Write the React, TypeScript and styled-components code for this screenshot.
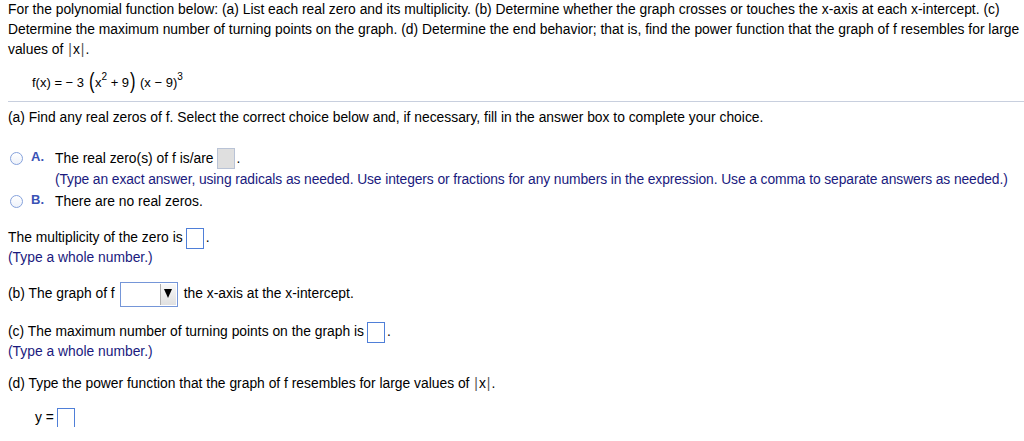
import React from 'react';
import styled, { createGlobalStyle } from 'styled-components';

const GlobalStyle = createGlobalStyle`
  html, body {
    margin: 0;
    padding: 0;
    background: #ffffff;
  }
  body {
    font-family: 'Liberation Sans', Arial, sans-serif;
    font-size: 13.85px;
    color: #000000;
  }
`;

const Page = styled.div`
  padding: 0 0 0 8px;
  width: 1016px;
`;

const Intro = styled.div`
  margin-top: -1px;
`;

const IntroLine = styled.div`
  line-height: 20px;
  height: 20px;
  white-space: pre;
`;

const Bar = styled.span`
  color: #555;
  margin: 0 1px;
`;

const Formula = styled.div`
  padding-left: 24px;
  height: 26px;
  line-height: 26px;
  margin-top: 9px;
  font-size: 13px;
  white-space: pre;
`;

const Paren = styled.span`
  font-size: 22px;
  font-weight: 300;
  display: inline-block;
  transform: scaleX(0.75);
  vertical-align: -1px;
`;

const Sup = styled.sup`
  font-size: 10px;
  line-height: 0;
  vertical-align: 7px;
`;

const Divider = styled.hr`
  border: 0;
  border-top: 1px solid #c8cfde;
  margin: 7px 0 0 0;
`;

const Line = styled.div<{ $top?: number; $indent?: number; $note?: boolean }>`
  margin-top: ${p => p.$top ?? 0}px;
  padding-left: ${p => p.$indent ?? 0}px;
  line-height: 20px;
  height: 20px;
  color: ${p => (p.$note ? '#1a1a7e' : '#000')};
  white-space: pre;
`;

const Note = styled.span`
  color: #1a1a7e;
  letter-spacing: -0.1px;
`;

const Choice = styled.div<{ $top?: number }>`
  display: flex;
  align-items: center;
  height: 22px;
  margin-top: ${p => p.$top ?? 0}px;
  white-space: pre;
`;

const Radio = styled.span`
  width: 13px;
  height: 13px;
  border-radius: 50%;
  border: 1.5px solid #86a2dc;
  background: linear-gradient(#ffffff, #eef2fa);
  margin-left: 2px;
  box-sizing: border-box;
  flex: none;
`;

const Letter = styled.span`
  color: #3a52b5;
  font-weight: bold;
  font-size: 13px;
  width: 24px;
  margin-left: 8px;
  margin-top: -4px;
`;

const Box = styled.span<{ $filled?: boolean }>`
  display: inline-block;
  box-sizing: border-box;
  width: 18px;
  height: 21px;
  margin: 0 2px 0 3px;
  vertical-align: middle;
  border: 1px solid ${p => (p.$filled ? '#b9c3d6' : '#4f7fd8')};
  background: ${p => (p.$filled ? '#dfdfdf' : '#ffffff')};
`;

const Select = styled.span`
  display: inline-flex;
  justify-content: flex-end;
  box-sizing: border-box;
  width: 58px;
  height: 25px;
  margin: 0 6px 0 5px;
  vertical-align: middle;
  border: 1px solid #7596d8;
  padding: 1px;
  background: #fff;
`;

const SelectButton = styled.span`
  width: 15px;
  display: flex;
  align-items: center;
  justify-content: center;
  background: linear-gradient(#f8f8f8, #e0e0e0);
  border-left: 1px solid #b0b0b0;
`;

const Arrow = styled.span`
  width: 0;
  height: 0;
  border-left: 4px solid transparent;
  border-right: 4px solid transparent;
  border-top: 9px solid #000;
  margin-top: -2px;
`;

const AbsX = () => (
  <>
    <Bar>|</Bar>x<Bar>|</Bar>
  </>
);

export default function App() {
  return (
    <>
      <GlobalStyle />
      <Page>
        <Intro>
          <IntroLine>For the polynomial function below: (a) List each real zero and its multiplicity. (b) Determine whether the graph crosses or touches the x-axis at each x-intercept. (c)</IntroLine>
          <IntroLine>Determine the maximum number of turning points on the graph. (d) Determine the end behavior; that is, find the power function that the graph of f resembles for large</IntroLine>
          <IntroLine>
            values of <AbsX />.
          </IntroLine>
        </Intro>
        <Formula>
          f(x) = − 3 <Paren>(</Paren>x<Sup>2</Sup> + 9<Paren>)</Paren> (x − 9)<Sup>3</Sup>
        </Formula>
        <Divider />
        <Line $top={5}>(a) Find any real zeros of f. Select the correct choice below and, if necessary, fill in the answer box to complete your choice.</Line>
        <Choice $top={20}>
          <Radio />
          <Letter>A.</Letter>
          <span>The real zero(s) of f is/are</span>
          <Box $filled />
          <span>.</span>
        </Choice>
        <Line $indent={47}>
          <Note>(Type an exact answer, using radicals as needed. Use integers or fractions for any numbers in the expression. Use a comma to separate answers as needed.)</Note>
        </Line>
        <Choice $top={1}>
          <Radio />
          <Letter>B.</Letter>
          <span>There are no real zeros.</span>
        </Choice>
        <Line $top={15}>
          The multiplicity of the zero is<Box />.
        </Line>
        <Line $note>(Type a whole number.)</Line>
        <Line $top={15}>
          (b) The graph of f
          <Select>
            <SelectButton>
              <Arrow />
            </SelectButton>
          </Select>
          the x-axis at the x-intercept.
        </Line>
        <Line $top={19}>
          (c) The maximum number of turning points on the graph is<Box />.
        </Line>
        <Line $note>(Type a whole number.)</Line>
        <Line $top={12}>
          (d) Type the power function that the graph of f resembles for large values of <AbsX />.
        </Line>
        <Line $top={14} $indent={27}>
          y =<Box />
        </Line>
      </Page>
    </>
  );
}
